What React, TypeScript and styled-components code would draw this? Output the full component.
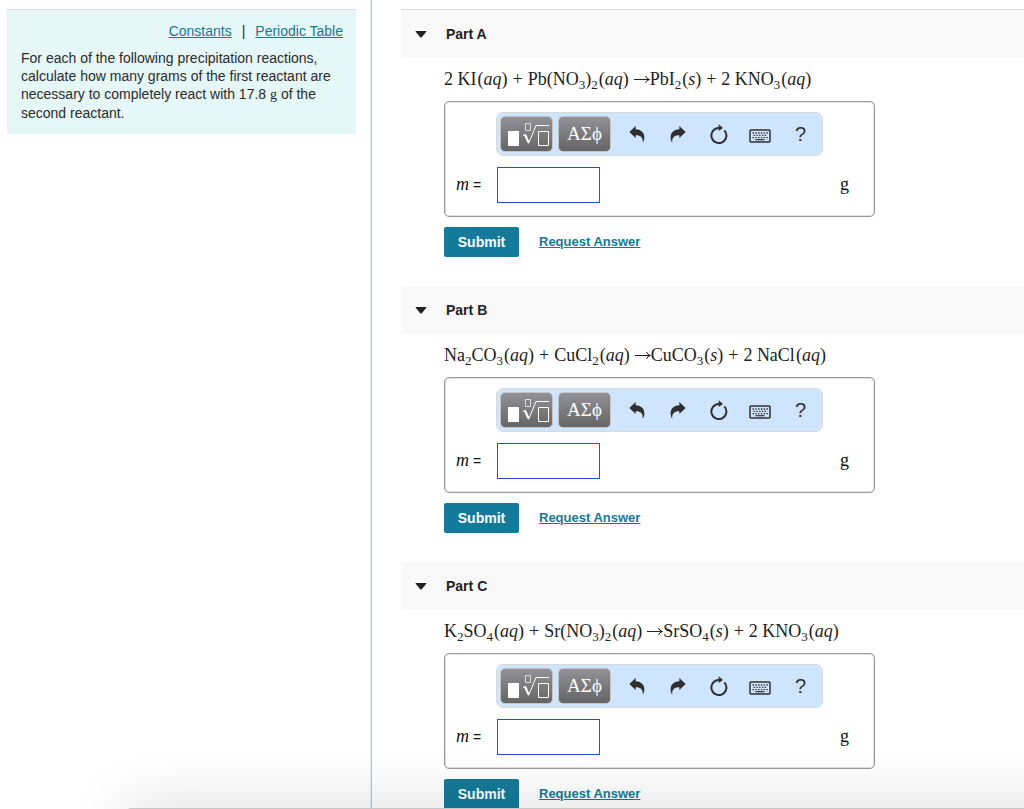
import React from "react";
import styled, { createGlobalStyle } from "styled-components";

const sans = `"Liberation Sans", Arial, sans-serif`;
const serif = `"Liberation Serif", "Times New Roman", serif`;
const teal = "#147a99";

const GlobalStyle = createGlobalStyle`
  *, *::before, *::after { box-sizing: border-box; }
  body { margin: 0; background: #fff; color: #2b2b2b; font: 14px/18px ${sans}; }
`;

const Page = styled.div`
  display: grid;
  grid-template-columns: 372px minmax(0, 1fr);
  height: 100vh;
  overflow: hidden;
`;

const Sidebar = styled.aside`
  padding: 9px 15px 0 7px;
  border-right: 1px solid #b3c7da;
  box-shadow: inset -1px 0 #e6eef5;
`;

const Intro = styled.section`
  padding: 12px 13px 12px 14px;
  background: #e6f7f8;
  border-top: 1px solid #d4dcdc;
`;

const ReferenceLinks = styled.nav`
  display: flex;
  justify-content: flex-end;
  gap: 10px;
  margin-bottom: 9px;
`;

const TextLink = styled.a<{ $strong?: boolean }>`
  color: ${teal};
  font-size: ${(p) => (p.$strong ? "13px" : "14px")};
  font-weight: ${(p) => (p.$strong ? 700 : 400)};
  text-decoration: underline;
`;

const Prompt = styled.p`
  margin: 0;
`;

const PromptUnit = styled.span`
  font-family: ${serif};
`;

const Parts = styled.main`
  padding: 9px 0 0 29px;
  overflow-y: auto;
  scrollbar-width: none;
`;

const PartSection = styled.section`
  margin-bottom: 29px;
`;

const PartHeader = styled.h2<{ $first: boolean }>`
  height: ${(p) => (p.$first ? "49px" : "48px")};
  margin: 0;
  background: #f9f9f9;
  border-top: ${(p) => (p.$first ? "1px solid #d8d8d8" : "none")};
`;

const Toggle = styled.button`
  display: flex;
  align-items: center;
  gap: 19px;
  width: 100%;
  height: 100%;
  padding: 0 14px;
  border: 0;
  background: none;
  color: #222;
  font: 700 14px/18px ${sans};
  text-align: left;
`;

const PartBody = styled.div`
  padding-left: 43px;
`;

const Equation = styled.div`
  display: flex;
  align-items: center;
  height: 43px;
  padding-bottom: 2px;
  color: #222;
  font: 18px/24px ${serif};
  white-space: pre;

  sub {
    font-size: 13px;
    line-height: 0;
    vertical-align: -4px;
  }
`;

const Operator = styled.span`
  padding: 0 5px;
`;

const Phase = styled.span`
  margin-left: 1px;
`;

const Arrow = styled.svg`
  flex: none;
  width: 16px;
  height: 10px;
  margin-left: 5px;
  fill: none;
  stroke: #222;
`;

const AnswerBox = styled.div`
  display: grid;
  grid-template-columns: 41px 1fr 23px;
  align-content: start;
  gap: 11px 0;
  width: 100%;
  max-width: 431px;
  height: 116px;
  padding: 10px 11px;
  border: 1px solid #999;
  border-radius: 5px;
  box-shadow: inset 0 0 0 1px #e2e2e2;
`;

const Toolbar = styled.div`
  grid-column: 2;
  display: flex;
  align-items: center;
  gap: 5px;
  width: 327px;
  height: 44px;
  margin-left: -1px;
  padding-left: 3px;
  border: 1px solid #d9d9d9;
  border-radius: 7px;
  background: #cfe5fe;
`;

const PaletteButton = styled.button`
  display: flex;
  flex: none;
  align-items: center;
  justify-content: center;
  width: 53px;
  height: 36px;
  padding: 0;
  border: 1px solid #c4c4c4;
  border-radius: 5px;
  background: linear-gradient(#929198, #656565);
  color: #fff;
  font: 19px/20px ${serif};
`;

const ToolGroup = styled.div`
  display: flex;
`;

const ToolButton = styled.button`
  display: flex;
  align-items: center;
  justify-content: center;
  width: 41px;
  height: 36px;
  padding: 0;
  border: 0;
  background: none;
  color: #303030;
  font: 20px/24px ${sans};
`;

const MathLabel = styled.label`
  grid-column: 1;
  align-self: center;
  padding-bottom: 2px;
  font: 14px/20px ${sans};
  color: #111;

  i {
    font: italic 18px/20px ${serif};
  }
`;

const AnswerInput = styled.input`
  width: 103px;
  height: 36px;
  padding: 0 6px;
  border: 1px solid #1f57c8;
  background: #fff;
  font: 18px/20px ${serif};
`;

const Unit = styled.span`
  align-self: center;
  padding-bottom: 2px;
  font: 18px/20px ${serif};
  color: #111;
`;

const Actions = styled.div`
  display: flex;
  align-items: center;
  gap: 20px;
  margin-top: 10px;
`;

const SubmitButton = styled.button`
  min-width: 75px;
  height: 30px;
  padding: 0 13px;
  border: 0;
  border-radius: 2px;
  background: ${teal};
  color: #fff;
  font: 700 14px/18px ${sans};
`;

const BottomShade = styled.div`
  position: fixed;
  left: 126px;
  right: -80px;
  bottom: -39px;
  height: 40px;
  background: #c8c8c8;
  border-radius: 5px;
  box-shadow: 0 0 60px rgba(0, 0, 0, 0.17);
  pointer-events: none;
`;

const Caret = () => (
  <svg width="12" height="7" viewBox="0 0 12 7" aria-hidden="true">
    <path d="M1 0h10q1 0 .3.8L6.8 6.2q-.8.8-1.6 0L.7.8Q0 0 1 0z" fill="#222" />
  </svg>
);

const TemplateIcon = () => (
  <svg width="45" height="28" viewBox="0 0 45 28" fill="none" stroke="#fff" aria-hidden="true">
    <path d="M4 11h11v15H4z" fill="#fff" stroke="none" />
    <path d="M21.5 3.5h5v7h-5z" stroke="#ddd" />
    <path d="M19 15.500l2-1" />
    <path d="M21 14.500l3.500 8" strokeWidth="2" />
    <path d="M24.500 23.500L32 5.500h13" />
    <path d="M34.500 11.500h10v14h-10z" />
  </svg>
);

const UndoIcon = ({ flipped = false }: { flipped?: boolean }) => (
  <svg width="16" height="18" viewBox="0 0 48 54" fill="currentColor" aria-hidden="true">
    <path
      transform={flipped ? "translate(48 0) scale(-1 1)" : undefined}
      d="M1 21L20 3v10C38 14 48 25 46 41q-1 7-5 12C43 39 36 31 20 31v8z"
    />
  </svg>
);

const ResetIcon = () => (
  <svg width="18" height="20" viewBox="0 0 54 60" fill="none" aria-hidden="true">
    <path d="M43 19A22.500 22.500 0 1 1 26 12h4" stroke="currentColor" strokeWidth="6" />
    <path d="M26 1l13 11-13 9z" fill="currentColor" />
  </svg>
);

const KeyboardIcon = () => (
  <svg width="22" height="18" viewBox="0 0 22 18" fill="none" stroke="currentColor" aria-hidden="true">
    <rect x="1" y="5" width="20" height="12" rx="1" strokeWidth="1.500" />
    <path d="M3.500 8h15.500M4.500 10.300h14M3.500 12.600h15.500" strokeWidth="1.300" strokeDasharray="1.400 1.400" />
    <path d="M6.500 14.700h9" strokeWidth="1.200" />
  </svg>
);

const Plus = () => <Operator>+</Operator>;
const Yields = () => (
  <Arrow viewBox="0 0 16 10" role="img" aria-label="yields">
    <path d="M0 5.500h15M11.500 2Q12.500 5 15.500 5.500 12.500 6 11.500 9" />
  </Arrow>
);
const State = ({ of }: { of: string }) => (
  <Phase>
    (<i>{of}</i>)
  </Phase>
);

const parts = [
  {
    name: "A",
    equation: (
      <>
        <span>2 KI<State of="aq" /></span>
        <Plus />
        <span>Pb(NO<sub>3</sub>)<sub>2</sub><State of="aq" /></span>
        <Yields />
        <span>PbI<sub>2</sub><State of="s" /></span>
        <Plus />
        <span>2 KNO<sub>3</sub><State of="aq" /></span>
      </>
    ),
  },
  {
    name: "B",
    equation: (
      <>
        <span>Na<sub>2</sub>CO<sub>3</sub><State of="aq" /></span>
        <Plus />
        <span>CuCl<sub>2</sub><State of="aq" /></span>
        <Yields />
        <span>CuCO<sub>3</sub><State of="s" /></span>
        <Plus />
        <span>2 NaCl<State of="aq" /></span>
      </>
    ),
  },
  {
    name: "C",
    equation: (
      <>
        <span>K<sub>2</sub>SO<sub>4</sub><State of="aq" /></span>
        <Plus />
        <span>Sr(NO<sub>3</sub>)<sub>2</sub><State of="aq" /></span>
        <Yields />
        <span>SrSO<sub>4</sub><State of="s" /></span>
        <Plus />
        <span>2 KNO<sub>3</sub><State of="aq" /></span>
      </>
    ),
  },
];

function Part({ name, equation, first }: { name: string; equation: React.ReactNode; first: boolean }) {
  const inputId = `mass-${name}`;
  return (
    <PartSection>
      <PartHeader $first={first}>
        <Toggle type="button" aria-expanded="true">
          <Caret />
          Part {name}
        </Toggle>
      </PartHeader>
      <PartBody>
        <Equation>{equation}</Equation>
        <AnswerBox>
          <Toolbar role="toolbar">
            <PaletteButton type="button" aria-label="Templates"><TemplateIcon /></PaletteButton>
            <PaletteButton type="button">ΑΣϕ</PaletteButton>
            <ToolGroup>
              <ToolButton type="button" aria-label="Undo"><UndoIcon /></ToolButton>
              <ToolButton type="button" aria-label="Redo"><UndoIcon flipped /></ToolButton>
              <ToolButton type="button" aria-label="Reset"><ResetIcon /></ToolButton>
              <ToolButton type="button" aria-label="Keyboard shortcuts"><KeyboardIcon /></ToolButton>
              <ToolButton type="button">?</ToolButton>
            </ToolGroup>
          </Toolbar>
          <MathLabel htmlFor={inputId}><i>m</i> =</MathLabel>
          <AnswerInput id={inputId} type="text" />
          <Unit>g</Unit>
        </AnswerBox>
        <Actions>
          <SubmitButton type="button">Submit</SubmitButton>
          <TextLink href="#" $strong>Request Answer</TextLink>
        </Actions>
      </PartBody>
    </PartSection>
  );
}

export default function App() {
  return (
    <>
      <GlobalStyle />
      <Page>
        <Sidebar>
          <Intro>
            <ReferenceLinks>
              <TextLink href="#">Constants</TextLink>
              <span>|</span>
              <TextLink href="#">Periodic Table</TextLink>
            </ReferenceLinks>
            <Prompt>
              For each of the following precipitation reactions, calculate how many grams of the first
              reactant are necessary to completely react with 17.8 <PromptUnit>g</PromptUnit> of the
              second reactant.
            </Prompt>
          </Intro>
        </Sidebar>
        <Parts>
          {parts.map((part, index) => (
            <Part key={part.name} name={part.name} equation={part.equation} first={index === 0} />
          ))}
        </Parts>
      </Page>
      <BottomShade />
    </>
  );
}
